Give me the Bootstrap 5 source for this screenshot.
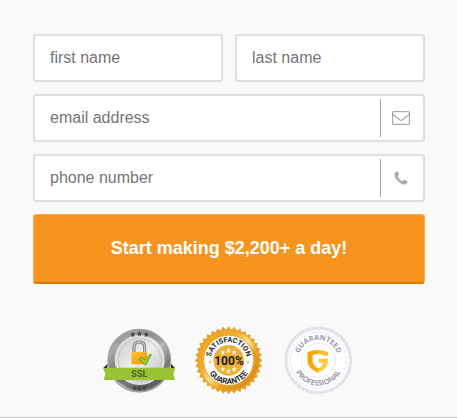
<!DOCTYPE html>
<html lang="en">
<head>
<meta charset="utf-8">
<meta name="viewport" content="width=device-width, initial-scale=1">
<title>Sign up</title>
<link href="https://cdn.jsdelivr.net/npm/bootstrap@5.3.0/dist/css/bootstrap.min.css" rel="stylesheet">
<style>
body{background:#f9f9f9;font-family:"Liberation Sans",Arial,sans-serif;border-bottom:1px solid #ccc}
.signup{padding:34px 32px 0 33px}
.signup form{gap:12px}
.name-row{--bs-gutter-x:12px}
.field{background:#fff;border:2px solid #dfdfdf;border-radius:3px;height:48px}
.field:focus-within{border-color:#f7941d}
.field .form-control{font-size:16px;line-height:20px;padding:0 15px;color:#444;height:44px}
.field .form-control::placeholder{color:#757575;opacity:1}
.field-icon{width:43px;height:38px;padding-right:2px;border-left:1px solid #a3a3a3;color:#aaa}
.btn-start{height:70px;background:#f7941d;color:#fff;font-size:18px;font-weight:700;border:1px solid #f9ae52;border-bottom:2px solid #d97b0c;border-radius:3px;padding:0}
.btn-start:hover,.btn-start:active{background:#e98710!important;color:#fff!important}
.seals{margin-top:36px}
.seals svg{width:82px;height:82px}
svg text{font-weight:700}
svg .din{font-family:Roboto,sans-serif}
svg .narrow{font-family:"Liberation Sans Narrow",Roboto,sans-serif}
svg .soft{font-family:"Open Sans",sans-serif}
</style>
</head>
<body class="min-vh-100">
<main class="signup">
<form class="d-flex flex-column">
  <div class="row name-row">
    <div class="col-6"><div class="field"><input class="form-control border-0 shadow-none bg-transparent" type="text" placeholder="first name" aria-label="first name"></div></div>
    <div class="col-6"><div class="field"><input class="form-control border-0 shadow-none bg-transparent" type="text" placeholder="last name" aria-label="last name"></div></div>
  </div>
  <div class="field d-flex align-items-center">
    <input class="form-control border-0 shadow-none bg-transparent" type="email" placeholder="email address" aria-label="email address">
    <span class="field-icon flex-shrink-0 d-flex align-items-center justify-content-center">
      <svg width="18" height="14" viewBox="0 0 18 14" fill="none" stroke="currentColor" aria-hidden="true"><rect x=".6" y=".6" width="16.8" height="12.8" rx="1" stroke-width="1.2"/><path d="M1 3.5 7.5 8.7Q9 9.9 10.5 8.7L17 3.5" stroke-width="1.2"/></svg>
    </span>
  </div>
  <div class="field d-flex align-items-center">
    <input class="form-control border-0 shadow-none bg-transparent" type="tel" placeholder="phone number" aria-label="phone number">
    <span class="field-icon flex-shrink-0 d-flex align-items-center justify-content-center">
      <svg width="14" height="14" viewBox="0 0 14 14" fill="currentColor" aria-hidden="true"><path d="M3.1.5C3.5.4 3.7.6 3.9 1L5 3.1C5.3 3.7 5.2 4 4.8 4.3L3.9 5.1C3.6 5.4 3.7 5.7 3.9 6.1 4.8 7.7 6.1 9.1 7.9 10.1 8.3 10.3 8.6 10.4 8.9 10.1L9.8 9.1C10.1 8.8 10.4 8.7 10.9 9L13 10.1C13.5 10.4 13.6 10.6 13.5 11.1 13.1 12.8 12.1 13.5 10.6 13.5 8.9 13.5 7.2 12.8 5.2 11.2 2.4 9 .5 6.2.5 3.7.5 1.9 1.4.7 3.1.5Z"/></svg>
    </span>
  </div>
  <button class="btn btn-start w-100" type="submit">Start making $2,200+ a day!</button>
</form>
<div class="seals d-flex justify-content-center gap-2">
  <svg viewBox="0 0 246 246" role="img" aria-label="SSL secured">
    <defs>
      <linearGradient id="steel" x1="0" y1="0" x2="1" y2="1"><stop offset="0" stop-color="#777"/><stop offset=".2" stop-color="#aaa"/><stop offset=".38" stop-color="#777"/><stop offset=".55" stop-color="#bbb"/><stop offset=".75" stop-color="#777"/><stop offset="1" stop-color="#999"/></linearGradient>
      <linearGradient id="plate" x1="0" y1="0" x2="1" y2="1"><stop offset="0" stop-color="#c9c9c9"/><stop offset=".5" stop-color="#eee"/><stop offset="1" stop-color="#bababa"/></linearGradient>
      <linearGradient id="lock" x1="0" y1="0" x2="1" y2="1"><stop offset="0" stop-color="#ffc52b"/><stop offset="1" stop-color="#e79109"/></linearGradient>
    </defs>
    <circle cx="124" cy="122" r="94" fill="url(#steel)" stroke="#a3a3a3" stroke-width="4"/>
    <path d="M52 64A94 94 0 0 1 198 64L178 80A68 68 0 0 0 72 80Z" fill="#999" opacity=".6"/>
    <path d="M58 181A92 92 0 0 0 192 181L168 166A66 66 0 0 1 82 166Z" fill="#454545" opacity=".55"/>
    <circle cx="125" cy="120" r="73" fill="url(#plate)" stroke="#e2e2e2" stroke-width="4"/>
    <circle cx="125" cy="120" r="64" fill="none" stroke="#b5b5b5" stroke-width="2"/>
    <g fill="#424242"><path id="star" d="m125 33 2 5 5 1-4 4 1 6-4-3-5 3 1-6-4-4 6-1z"/><use href="#star" transform="translate(-20 2)"/><use href="#star" transform="translate(20 2)"/><use href="#star" transform="translate(0 164)"/><use href="#star" transform="translate(-14 162)"/><use href="#star" transform="translate(14 162)"/></g>
    <path d="M108 100V82Q108 66 124 66T140 82V100" fill="none" stroke="#777" stroke-width="9"/><path d="M108 100V82Q108 66 124 66T140 82V100" fill="none" stroke="#c5c5c5" stroke-width="4"/>
    <rect x="100" y="96" width="47" height="37" rx="3" fill="url(#lock)"/>
    <path d="m123 117 9-5 9 9 14-18 5 1-15 29-5 1z" fill="#9bd11c" stroke="#57851f" stroke-width="2"/>
    <path d="M16 144 28 132V144ZM231 144 219 132V144Z" fill="#171717"/>
    <path d="M15 143H232L226 161 231 180H17L22 161Z" fill="#9ac331"/>
    <text class="din" x="124" y="171" text-anchor="middle" font-size="27" fill="#4b6420">SSL</text>
  </svg>
  <svg viewBox="0 0 246 246" role="img" aria-label="100% satisfaction guarantee">
    <defs>
      <linearGradient id="gold" x1="0" y1="0" x2="1" y2="1"><stop offset="0" stop-color="#eda51b"/><stop offset=".35" stop-color="#edac29"/><stop offset=".5" stop-color="#ffe08a"/><stop offset=".65" stop-color="#e9a020"/><stop offset="1" stop-color="#d5840b"/></linearGradient>
      <path id="satTop" d="M74 145A54 54 0 1 1 170 145"/><path id="satBottom" d="M53 123A69 69 0 0 0 191 123"/>
    </defs>
    <g id="teeth" fill="#e6a42b"></g>
    <circle cx="122" cy="121" r="90" fill="url(#gold)"/>
    <circle cx="122" cy="121" r="92" fill="none" stroke="#e2a12b" stroke-width="3"/>
    <circle cx="122" cy="121" r="75" fill="#fff" stroke="#d89a2a" stroke-width="2"/>
    <circle cx="122" cy="121" r="46" fill="#edb03a"/>
    <g fill="#292927" text-anchor="middle"><text class="din" font-size="22"><textPath href="#satTop" startOffset="50%">SATISFACTION</textPath></text><text class="din" font-size="24"><textPath href="#satBottom" startOffset="50%">GUARANTEE</textPath></text></g>
    <g fill="#fff3cb"><use href="#star" transform="translate(-3 50)"/><use href="#star" transform="translate(-20 56)"/><use href="#star" transform="translate(14 56)"/><use href="#star" transform="translate(-3 112)"/><use href="#star" transform="translate(-20 106)"/><use href="#star" transform="translate(14 106)"/></g>
    <circle cx="66" cy="127" r="3" fill="#e7a22a"/><circle cx="180" cy="127" r="3" fill="#e7a22a"/>
    <text class="narrow" x="123" y="135" text-anchor="middle" font-size="36" fill="#20201b">100%</text>
  </svg>
  <svg viewBox="0 0 246 246" role="img" aria-label="Guaranteed professional">
    <defs><path id="proTop" d="M69 150A60 60 0 1 1 173 150"/><path id="proBottom" d="M45 121A76 76 0 0 0 197 121"/></defs>
    <circle cx="121" cy="121" r="98" fill="#fafafb" stroke="#dedfe5" stroke-width="7" stroke-dasharray="13 2"/>
    <circle cx="121" cy="121" r="93" fill="#fff" stroke="#e7e8ee" stroke-width="4"/>
    <circle cx="121" cy="121" r="84" fill="none" stroke="#dfe0e7" stroke-width="2"/>
    <circle cx="121" cy="121" r="51" fill="none" stroke="#dfe0e7" stroke-width="2"/>
    <g fill="#9a9cab" font-size="22" text-anchor="middle"><text class="soft"><textPath href="#proTop" startOffset="50%">GUARANTEED</textPath></text><text class="soft"><textPath href="#proBottom" startOffset="50%">PROFESSIONAL</textPath></text></g>
    <path d="M121 90Q135 92 150 96V107H136V104L121 102H102V125Q104 139 121 147V158Q90 146 89 123V96Q105 92 121 90Z" fill="#fdbd2d"/>
    <path d="M121 90Q105 92 89 96V123Q90 146 121 158V145Q105 138 104 123V105Q113 102 121 102Z" fill="#f5a70b"/>
    <path d="M121 145Q133 140 135 128H122V116H150V123Q149 146 121 158Z" fill="#ffca42"/>
  </svg>
</div>
</main>
<script>
// Serrated rim of the gold seal: alternating outer and inner points.
const rim = Array.from({length: 72}, (_, i) => {
  const a = i * Math.PI / 36, r = i % 2 ? 92 : 102;
  return (122 + r * Math.cos(a)).toFixed(1) + "," + (121 + r * Math.sin(a)).toFixed(1);
});
const shape = document.createElementNS("http://www.w3.org/2000/svg", "polygon");
shape.setAttribute("points", rim.join(" "));
document.getElementById("teeth").append(shape);
</script>
<script src="https://cdn.jsdelivr.net/npm/bootstrap@5.3.0/dist/js/bootstrap.bundle.min.js"></script>
</body>
</html>
